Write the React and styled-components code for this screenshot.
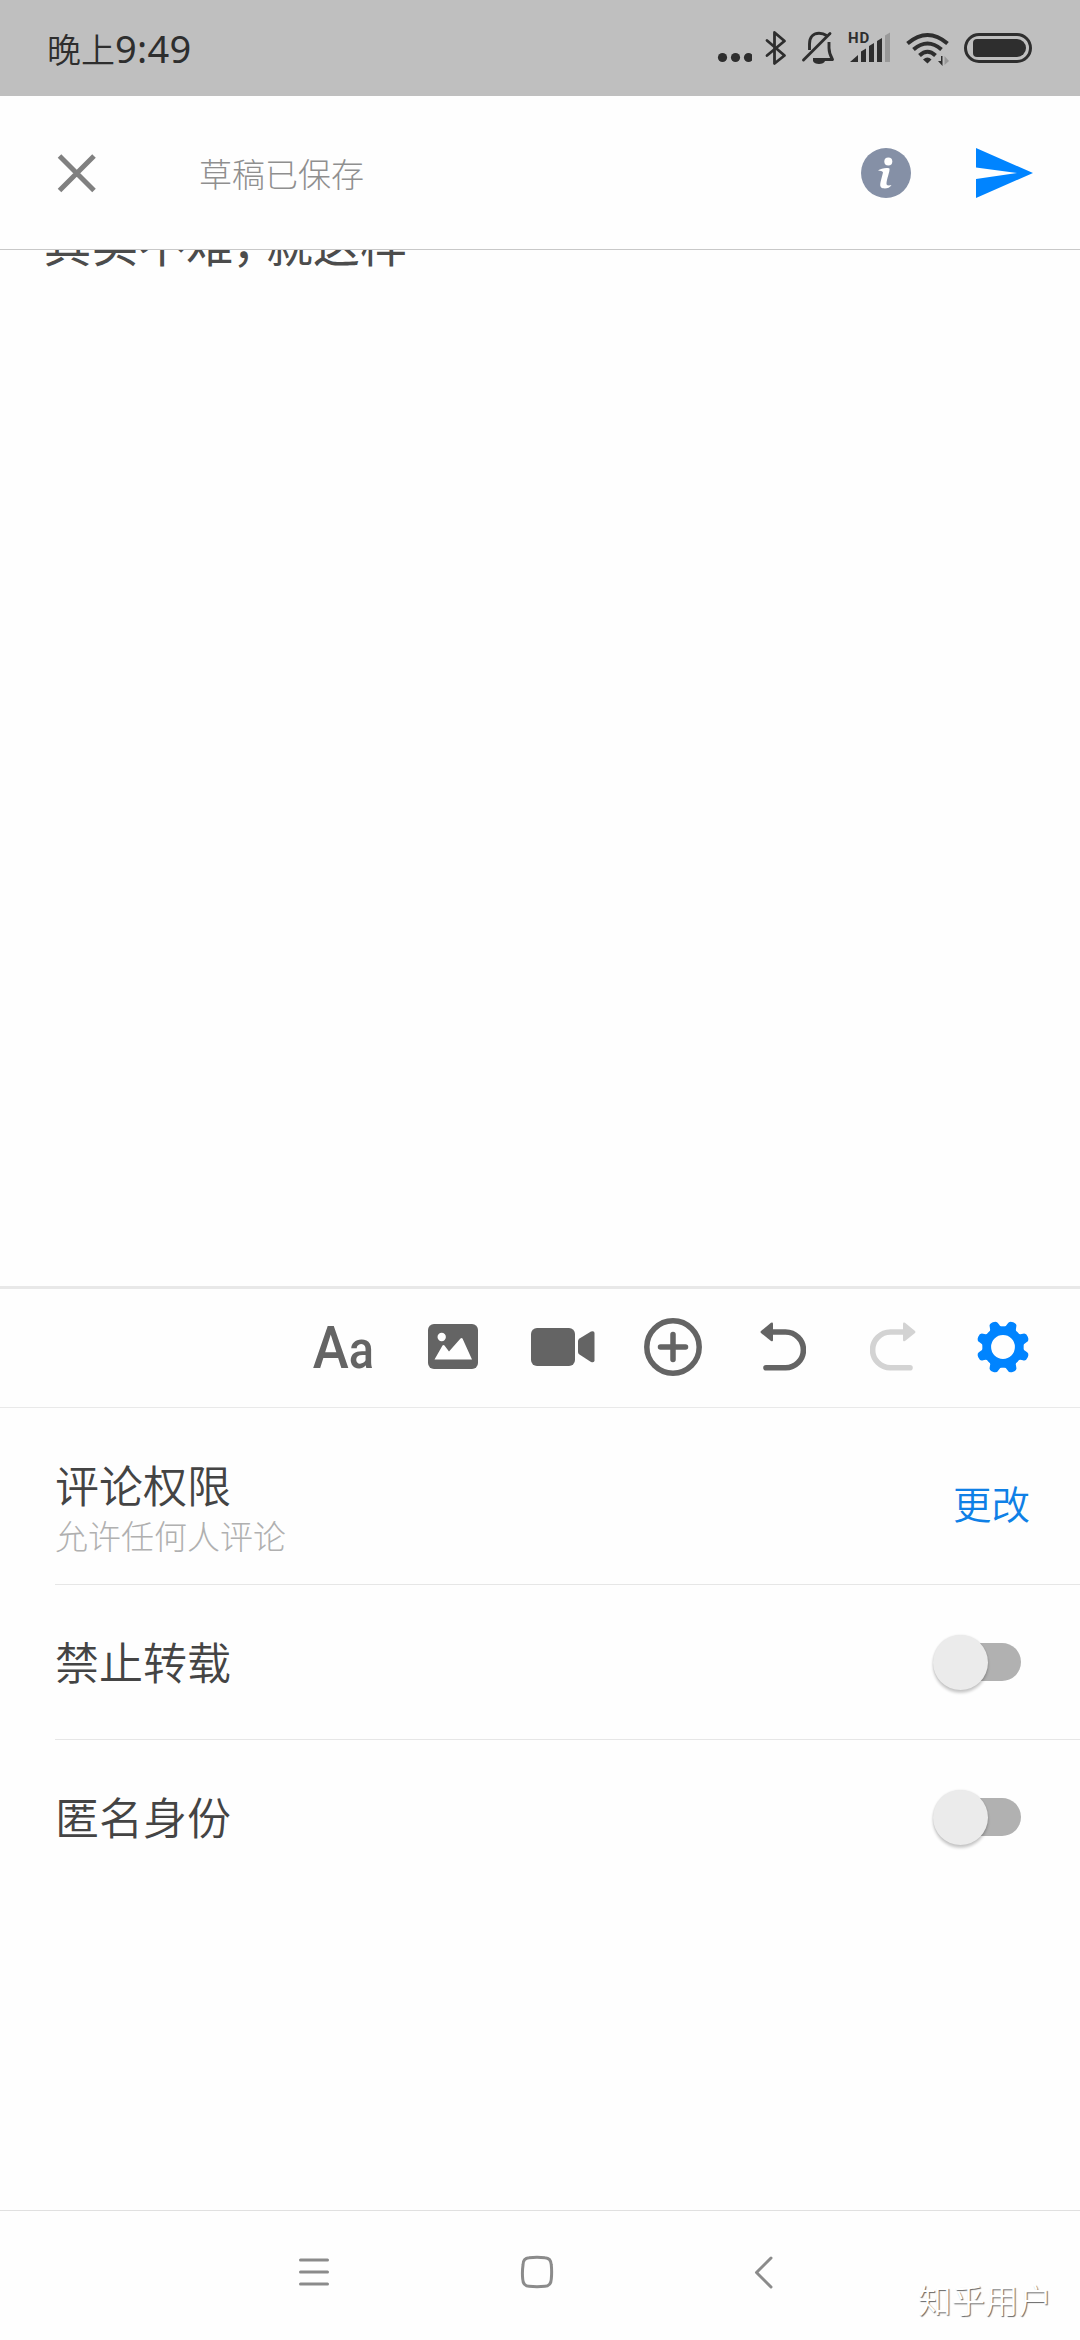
import React from "react";
import styled, { createGlobalStyle } from "styled-components";

const GlobalStyle = createGlobalStyle`
  * { box-sizing: border-box; }
  body {
    margin: 0;
    background: #fefefe;
    font-family: "Noto Sans CJK SC", sans-serif;
    font-weight: 350;
  }
  svg { display: block; flex: none; }
`;

const Page = styled.div`
  position: relative;
  display: flex;
  flex-direction: column;
  width: 1080px;
  height: 2340px;
  overflow: hidden;
  background: #fefefe;
`;

const StatusBar = styled.div`
  display: flex;
  align-items: center;
  justify-content: space-between;
  height: 96px;
  padding: 0 47px 0 47px;
  background: #bfbfbf;
  color: #2e2e2e;
`;

const Clock = styled.div`
  display: flex;
  align-items: baseline;
  font-size: 34px;
  line-height: 50px;
`;

const Digits = styled.span`
  font-family: "Noto Sans", sans-serif;
  font-size: 38px;
  font-weight: 400;
  letter-spacing: 0.3px;
`;

const StatusIcons = styled.div`
  display: flex;
  align-items: center;
  gap: 12px;
`;

const Header = styled.header`
  display: flex;
  align-items: center;
  height: 154px;
  padding: 0 47px 0 57px;
  border-bottom: 1px solid #c8c8c8;
`;

const DraftState = styled.div`
  flex: 1;
  margin-left: 102px;
  font-size: 33px;
  font-weight: 300;
  color: #8f8f8f;
`;

const HeaderActions = styled.div`
  display: flex;
  align-items: center;
  gap: 65px;
`;

const Editor = styled.main`
  flex: none;
  height: 1036px;
  padding: 0 44px;
  overflow: hidden;
`;

const Paragraph = styled.p`
  margin: -43px 0 0;
  font-size: 47.3px;
  line-height: 70px;
  font-weight: 400;
  color: #4c4c4c;
`;

const Comma = styled.span`
  letter-spacing: -14px;
  margin-left: -1px;
`;

const Toolbar = styled.div`
  display: flex;
  align-items: center;
  justify-content: flex-end;
  height: 122px;
  padding: 0 22px 3px 0;
  border-top: 3px solid #e8e8e8;
  border-bottom: 1px solid #e9e9e9;
`;

const Tool = styled.div`
  display: flex;
  align-items: center;
  justify-content: center;
  width: 110px;
  color: ${(p) => p.$color || "#646464"};
`;

const FontTool = styled.span`
  padding-top: 6px;
  font-family: Roboto, sans-serif;
  font-weight: 500;
  font-size: 59px;
  line-height: 60px;
  transform: scaleX(0.92);

  small {
    font-size: 51px;
  }
`;

const Settings = styled.section`
  flex: 1;
  padding-left: 55px;
`;

const Row = styled.div`
  display: flex;
  align-items: center;
  justify-content: space-between;
  height: ${(p) => p.$height}px;
  padding: 0 ${(p) => p.$right}px 0 0;
  border-bottom: 1px solid ${(p) => (p.$last ? "transparent" : "#e6e6e6")};
`;

const RowTitle = styled.div`
  margin-top: -2px;
  font-size: 44px;
  line-height: 60px;
  color: #444;
`;

const RowHint = styled.div`
  font-size: 33px;
  line-height: 42px;
  font-weight: 300;
  color: #b0b0b0;
`;

const RowText = styled.div`
  padding-top: 20px;
`;

const LinkButton = styled.div`
  padding-top: 12px;
  font-size: 38.5px;
  line-height: 50px;
  color: #0f80e6;
`;

const Track = styled.div`
  display: flex;
  align-items: center;
  width: 76px;
  height: 38px;
  border-radius: 19px;
  background: #b1b1b1;
`;

const Knob = styled.div`
  flex: none;
  width: 55px;
  height: 55px;
  margin-left: -12px;
  border-radius: 50%;
  background: #ebebeb;
  box-shadow: 0 3px 3px rgba(0, 0, 0, 0.2), 0 0 2px rgba(0, 0, 0, 0.12);
`;

const NavBar = styled.nav`
  display: flex;
  align-items: flex-start;
  height: 130px;
  padding: 44px 0 0 297px;
  border-top: 1px solid #e0e0e0;
`;

const NavIcon = styled.svg`
  margin-right: ${(p) => p.$gap || 0}px;
  fill: none;
  stroke: #8b8b8b;
  stroke-width: 3;
  stroke-linecap: round;
  stroke-linejoin: round;
`;

const Watermark = styled.div`
  position: absolute;
  right: 28px;
  bottom: 16px;
  font-size: 33.5px;
  line-height: 50px;
  color: #fff;
  text-shadow: 1px 1px 1px rgba(0, 0, 0, 0.6);
`;

const DotsIcon = () => (
  <svg width="35" height="44" fill="currentColor">
    <circle cx="5.5" cy="31.5" r="4.6" />
    <circle cx="18.5" cy="31.5" r="4.6" />
    <circle cx="31.5" cy="31.5" r="4.6" />
  </svg>
);

const BluetoothIcon = () => (
  <svg width="24" height="44" fill="none" stroke="currentColor" strokeWidth="2.8" strokeLinecap="round" strokeLinejoin="round">
    <path d="M3 14.5L20.5 29.5L10.5 37.5V6.5L20.5 15L3 29.5" />
  </svg>
);

const MutedBellIcon = () => (
  <svg width="36" height="44" fill="none" stroke="currentColor" strokeWidth="2.9" strokeLinecap="round" strokeLinejoin="round">
    <path d="M9.5 24V18C9.5 10.500 14 7.2 19 7.2C22 7.2 24.5 8 26.5 9.5M29 16V22C29 27 30.500 30 32.5 33.5H13" strokeLinecap="butt" />
    <path d="M3.500 34L30 7.500" />
    <path d="M13 35H25C24 39 14 39 13 35Z" fill="currentColor" stroke="none" />
  </svg>
);

const HdLabel = styled.text`
  font: 700 15px Roboto, sans-serif;
  letter-spacing: 0.8px;
`;

const SignalIcon = () => (
  <svg width="44" height="44" fill="currentColor">
    <HdLabel x="0" y="17">HD</HdLabel>
    <path d="M2 36L10 29V36ZM13 25.500L18 22.500V36H13ZM21 20L26 17V36H21ZM29 15L34 12V36H29Z" />
    <path d="M37 9.500L42 6.500V36H37Z" fill="#999" />
  </svg>
);

const WifiIcon = () => (
  <svg width="47" height="44" fill="none" stroke="currentColor" strokeWidth="4">
    <path d="M3.500 17.500Q23.500 .500 43.500 17.500" />
    <path d="M9.500 23.500Q23.500 11.500 37.500 23.500" />
    <path d="M15.500 29.500Q23.500 22 31.500 29.500" />
    <path d="M19 33.500Q23.500 29.500 27.500 33.500L23.500 37.500Z" fill="currentColor" stroke="none" />
    <path d="M38.500 30V40L34 35H37V30Z" fill="currentColor" stroke="none" />
    <path d="M40.500 30L45 35L40.500 39Z" fill="#999" stroke="none" />
  </svg>
);

const BatteryIcon = () => (
  <svg width="70" height="44">
    <rect x="2.500" y="8.500" width="65" height="27" rx="13.500" fill="none" stroke="currentColor" strokeWidth="3" />
    <path d="M14 13H54A9 9 0 0 1 54 31H14Q10 31 10 27V17Q10 13 14 13Z" fill="currentColor" />
  </svg>
);

const CloseIcon = () => (
  <svg width="40" height="40" stroke="#808080" strokeWidth="5">
    <path d="M2.500 3L37 37.500M37 3L2.500 37.500" />
  </svg>
);

const InfoIcon = () => (
  <svg width="50" height="50">
    <circle cx="25" cy="25" r="25" fill="#8590a6" />
    <circle cx="27.300" cy="13.500" r="4" fill="#fff" />
    <path d="M17 22.500C20 20.500 25 19.500 28.500 20.500C29 24 25.500 31 25.500 36C26 38 28.500 37.500 30.500 37C29 40 25 40.800 22 40.300C18.500 39.500 19 36.500 19.800 33L22 24.500C21.500 22.800 19 23 17 22.500Z" fill="#fff" />
  </svg>
);

const SendIcon = () => (
  <svg width="57" height="50" fill="#0084ff">
    <path d="M0 0L57 25L0 50V31L41 25L0 19.500Z" />
  </svg>
);

const ImageIcon = () => (
  <svg width="50" height="45">
    <rect width="50" height="45" rx="6" fill="currentColor" />
    <circle cx="13.700" cy="13" r="4.200" fill="#fff" />
    <path d="M6.500 35.500L14.500 21.500Q15.500 20.500 16.500 21.500L21 27.500L32.500 14.500Q33.500 13.500 34.500 14.500L44 35.500Z" fill="#fff" />
  </svg>
);

const VideoIcon = () => (
  <svg width="64" height="38" fill="currentColor">
    <rect width="44" height="38" rx="6" />
    <path d="M47 13Q47 11.500 48.500 10.500L60 3.500Q63.500 2.500 63.500 5V32.500Q63.500 35 60 34L48.500 26.500Q47 25.500 47 24Z" />
  </svg>
);

const AddIcon = () => (
  <svg width="58" height="58" fill="none" stroke="currentColor" strokeWidth="5.500" strokeLinecap="round">
    <circle cx="29" cy="29" r="26.200" />
    <path d="M29 16.500V41.500M16.500 29H41.500" />
  </svg>
);

const UndoIcon = ({ flip }) => (
  <svg width="46" height="50" viewBox="0 0 46 50">
    <g transform={flip ? "translate(46 0) scale(-1 1)" : undefined}>
      <path d="M10 10H25.500A17.900 17.900 0 0 1 25.500 45.800H6" fill="none" stroke="currentColor" strokeWidth="5.600" strokeLinecap="round" />
      <path d="M1 9L11 .800Q13 0 13 2V18Q13 20 11 19L1 11Q0 10 1 9Z" fill="currentColor" />
    </g>
  </svg>
);

const GearIcon = () => (
  <svg width="54" height="54" viewBox="-27 -27 54 54">
    <circle r="16.300" fill="none" stroke="currentColor" strokeWidth="8.800" />
    {[0, 1, 2, 3, 4, 5, 6, 7].map((i) => (
      <path
        key={i}
        transform={`rotate(${22.5 + i * 45})`}
        d="M-7.500 -18Q-4.800 -20 -4.600 -23.500Q-4.400 -26.800 0 -26.800Q4.400 -26.800 4.600 -23.500Q4.800 -20 7.500 -18Z"
        fill="currentColor"
      />
    ))}
  </svg>
);

const Switch = () => (
  <Track>
    <Knob />
  </Track>
);

const App = () => {
  return (
    <>
      <GlobalStyle />
      <Page>
        <StatusBar>
          <Clock>晚上<Digits>9:49</Digits></Clock>
          <StatusIcons>
            <DotsIcon />
            <BluetoothIcon />
            <MutedBellIcon />
            <SignalIcon />
            <WifiIcon />
            <BatteryIcon />
          </StatusIcons>
        </StatusBar>

        <Header>
          <CloseIcon />
          <DraftState>草稿已保存</DraftState>
          <HeaderActions>
            <InfoIcon />
            <SendIcon />
          </HeaderActions>
        </Header>

        <Editor>
          <Paragraph>其实不难<Comma>，</Comma>就这样</Paragraph>
        </Editor>

        <Toolbar>
          <Tool><FontTool>A<small>a</small></FontTool></Tool>
          <Tool><ImageIcon /></Tool>
          <Tool><VideoIcon /></Tool>
          <Tool><AddIcon /></Tool>
          <Tool><UndoIcon /></Tool>
          <Tool $color="#d3d3d3"><UndoIcon flip /></Tool>
          <Tool $color="#0084ff"><GearIcon /></Tool>
        </Toolbar>

        <Settings>
          <Row $height={177} $right={50}>
            <RowText>
              <RowTitle>评论权限</RowTitle>
              <RowHint>允许任何人评论</RowHint>
            </RowText>
            <LinkButton>更改</LinkButton>
          </Row>
          <Row $height={155} $right={59}>
            <RowTitle>禁止转载</RowTitle>
            <Switch />
          </Row>
          <Row $height={155} $right={59} $last>
            <RowTitle>匿名身份</RowTitle>
            <Switch />
          </Row>
        </Settings>

        <NavBar>
          <NavIcon width="34" height="36" $gap={188}>
            <path d="M3.500 5H30.500M3.500 17H30.500M3.500 29H30.500" />
          </NavIcon>
          <NavIcon width="36" height="36" $gap={197}>
            <path d="M4 10Q4 3 10 2.700Q18 2 26 2.700Q32 3 32.300 10Q33 17 32.300 24Q32 31 26 31.300Q18 32 10 31.300Q4 31 3.700 24Q3 17 4 10Z" />
          </NavIcon>
          <NavIcon width="22" height="36">
            <path d="M19 3L4.500 17.500L19 32" />
          </NavIcon>
        </NavBar>
        <Watermark>知乎用户</Watermark>
      </Page>
    </>
  );
};

export default App;
